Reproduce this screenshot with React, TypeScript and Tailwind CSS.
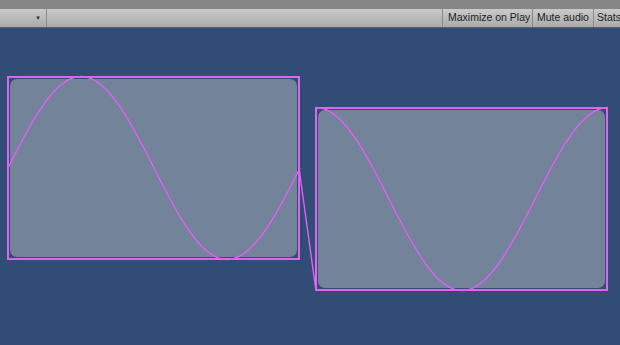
import React from 'react';

const W = 292;
const H = 183;

const wave = (x0: number, y0: number, phase: 'sin' | 'cos') => {
  const mid = y0 + H / 2;
  const amp = H / 2;
  const pts: string[] = [];
  for (let i = 0; i <= 120; i++) {
    const x = x0 + (W * i) / 120;
    const t = (2 * Math.PI * i) / 120;
    const y = phase === 'sin' ? mid - amp * Math.sin(t) : mid - amp * Math.cos(t);
    pts.push(`${x.toFixed(2)},${y.toFixed(2)}`);
  }
  return pts.join(' ');
};

const Panel = ({ left, top }: { left: number; top: number }) => (
  <div
    className="absolute border-2 border-[#dd66f0] p-[1px]"
    style={{ left, top, width: W + 1, height: H + 1 }}
  >
    <div className="h-full w-full rounded-[7px] bg-[#738399]" />
  </div>
);

export default function App() {
  return (
    <div
      className="flex h-[345px] w-[620px] flex-col overflow-hidden bg-[#324d75]"
      style={{ fontFamily: '"Liberation Sans", Arial, sans-serif' }}
    >
      {/* window title strip */}
      <div className="h-[9px] bg-[#868686]" />

      {/* game view toolbar */}
      <div className="flex h-[19px] items-stretch overflow-hidden whitespace-nowrap border-b border-[#5e5e5e] bg-gradient-to-b from-[#cacaca] to-[#ababab] text-[10.5px] text-[#1e1e1e]">
        <div className="flex w-[47px] shrink-0 items-center justify-end border-r border-[#8a8a8a] pr-[5px]">
          <span className="text-[6px] leading-none text-[#333]">▼</span>
        </div>
        <div className="flex-1" />
        <div className="flex w-[90px] shrink-0 items-center border-l border-[#8a8a8a] pl-[5px]">Maximize on Play</div>
        <div className="flex w-[61px] shrink-0 items-center border-l border-[#8a8a8a] pl-[4px]">Mute audio</div>
        <div className="flex w-[27px] shrink-0 items-center border-l border-[#8a8a8a] pl-[3px]">Stats</div>
      </div>

      {/* scene canvas */}
      <div className="relative flex-1">
        <div className="absolute left-0 top-[-28px] h-[345px] w-[620px]">
          <Panel left={7} top={76} />
          <Panel left={315} top={107} />
          <svg className="absolute left-0 top-0" width={620} height={345} viewBox="0 0 620 345">
            <g fill="none" stroke="#e060f5" strokeWidth={1.4} strokeLinejoin="round">
              <polyline points={wave(8, 76.5, 'sin')} />
              <line x1={299} y1={168} x2={316} y2={291} />
              <polyline points={wave(316, 107.5, 'cos')} />
            </g>
          </svg>
        </div>
      </div>
    </div>
  );
}
